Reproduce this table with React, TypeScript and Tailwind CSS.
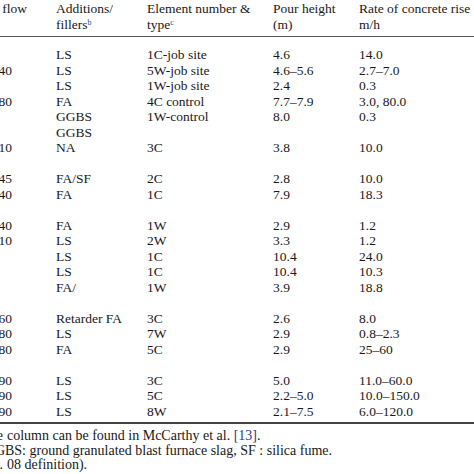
import type { ReactNode } from "react";

type Row = [string, string, string, string, string];

// one entry per printed line of the table body, blank lines are spacers
const ROWS: (Row | null)[] = [
  ["", "LS", "1C-job site", "4.6", "14.0"],
  ["640", "LS", "5W-job site", "4.6–5.6", "2.7–7.0"],
  ["", "LS", "1W-job site", "2.4", "0.3"],
  ["680", "FA", "4C control", "7.7–7.9", "3.0, 80.0"],
  ["", "GGBS", "1W-control", "8.0", "0.3"],
  ["", "GGBS", "", "", ""],
  ["710", "NA", "3C", "3.8", "10.0"],
  null,
  ["645", "FA/SF", "2C", "2.8", "10.0"],
  ["640", "FA", "1C", "7.9", "18.3"],
  null,
  ["640", "FA", "1W", "2.9", "1.2"],
  ["710", "LS", "2W", "3.3", "1.2"],
  ["", "LS", "1C", "10.4", "24.0"],
  ["", "LS", "1C", "10.4", "10.3"],
  ["", "FA/", "1W", "3.9", "18.8"],
  null,
  ["660", "Retarder FA", "3C", "2.6", "8.0"],
  ["680", "LS", "7W", "2.9", "0.8–2.3"],
  ["680", "FA", "5C", "2.9", "25–60"],
  null,
  ["690", "LS", "3C", "5.0", "11.0–60.0"],
  ["690", "LS", "5C", "2.2–5.0", "10.0–150.0"],
  ["690", "LS", "8W", "2.1–7.5", "6.0–120.0"],
];

const GRID = "grid grid-cols-[56px_91px_126px_86px_1fr]";

function Sup({ children }: { children: ReactNode }) {
  return <sup className="text-[8px] text-[#3b4a9b]">{children}</sup>;
}

// the table is cropped on the left: text in the first column overflows past x=0
function Clipped({ pr, children }: { pr: string; children: ReactNode }) {
  return <div className={`flex justify-end whitespace-nowrap ${pr}`}>{children}</div>;
}

function Footnote({
  hidden,
  edge,
  gap = "pl-[4px]",
  children,
}: {
  hidden: string;
  edge: string;
  gap?: string;
  children: ReactNode;
}) {
  return (
    <div className="flex whitespace-nowrap">
      <span className={`flex shrink-0 justify-end ${edge}`}>{hidden}</span>
      <span className={gap}>{children}</span>
    </div>
  );
}

export default function App() {
  return (
    <div
      className="h-[474px] w-[474px] overflow-hidden bg-white text-[13.5px] text-[#1a1819]"
      style={{ fontFamily: '"Liberation Serif", "Times New Roman", serif' }}
    >
      <div className={`${GRID} border-b border-[#555] pt-px pb-[3px] leading-4`}>
        <Clipped pr="pr-[29px]">Slump flow</Clipped>
        <div>
          Additions/
          <br />
          fillers<Sup>b</Sup>
        </div>
        <div className="whitespace-nowrap">
          Element number &amp;
          <br />
          type<Sup>c</Sup>
        </div>
        <div>
          Pour height
          <br />
          (m)
        </div>
        <div className="whitespace-nowrap">
          Rate of concrete rise
          <br />
          m/h
        </div>
      </div>

      <div className="border-b-2 border-[#444] pt-[10px] pb-[3px] leading-[15.5px]">
        {ROWS.map((r, i) =>
          r ? (
            <div key={i} className={GRID}>
              <Clipped pr="pr-[44px]">{r[0]}</Clipped>
              <div className="whitespace-nowrap">{r[1]}</div>
              <div className="whitespace-nowrap">{r[2]}</div>
              <div className="whitespace-nowrap">{r[3]}</div>
              <div className="whitespace-nowrap">{r[4]}</div>
            </div>
          ) : (
            <div key={i} className="h-[15.5px]" />
          ),
        )}
      </div>

      <div className="pt-[5px] text-[14px] leading-[14.5px]">
        <Footnote hidden="a Details in the" edge="w-[3px]">
          column can be found in McCarthy et al. <span className="text-[#2b3a8c]">[13]</span>.
        </Footnote>
        <Footnote hidden="b FA: fly ash, LS: limestone, GG" edge="w-[5px]" gap="pl-0">
          BS: ground granulated blast furnace slag, SF : silica fume.
        </Footnote>
        <Footnote hidden="c W: wall, C: column (ACI 347." edge="w-[3px]">
          08 definition).
        </Footnote>
      </div>
    </div>
  );
}
